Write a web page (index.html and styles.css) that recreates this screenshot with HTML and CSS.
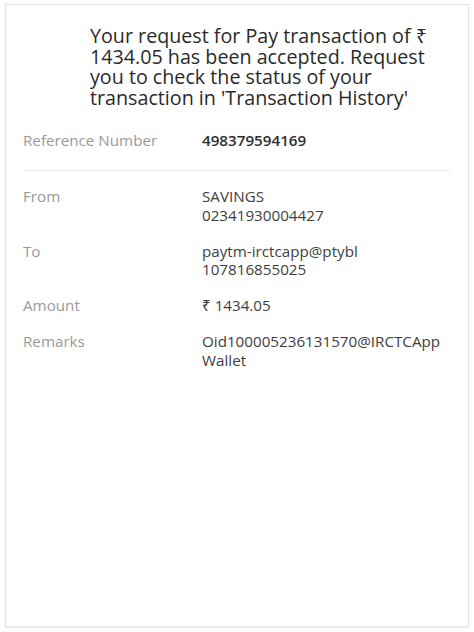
FILE: index.html
```html
<!DOCTYPE html>
<html>
<head>
<meta charset="utf-8">
<link rel="stylesheet" href="styles.css">
</head>
<body>
<div class="card">
  <p class="message">Your request for Pay transaction of ₹ 1434.05 has been accepted. Request you to check the status of your transaction in 'Transaction History'</p>
  <div class="row ref">
    <div class="label">Reference Number</div>
    <div class="value strong">498379594169</div>
  </div>
  <hr class="divider">
  <div class="details">
    <div class="row">
      <div class="label">From</div>
      <div class="value">SAVINGS<br>02341930004427</div>
    </div>
    <div class="row">
      <div class="label">To</div>
      <div class="value">paytm-irctcapp@ptybl<br>107816855025</div>
    </div>
    <div class="row">
      <div class="label">Amount</div>
      <div class="value">₹ 1434.05</div>
    </div>
    <div class="row">
      <div class="label">Remarks</div>
      <div class="value">Oid100005236131570@IRCTCApp Wallet</div>
    </div>
  </div>
</div>
</body>
</html>
```
FILE: styles.css
```css
html, body {
  margin: 0;
  padding: 0;
  background: #ffffff;
}
body {
  font-family: "Open Sans", "Noto Sans", sans-serif;
  color: #333;
  padding: 4px 5px 5px 5px;
}
.card {
  box-sizing: border-box;
  height: 623px;
  border: 1px solid #e4e4e4;
  box-shadow: 0 1px 2px rgba(0,0,0,0.08);
  background: #fff;
  padding: 0 17px;
}
.message {
  margin: 21px 0 0 67px;
  font-size: 19.7px;
  line-height: 20.6px;
  color: #2a2a2a;
  width: 356px;
}
.row {
  display: grid;
  grid-template-columns: 179px 1fr;
  font-size: 15.2px;
  line-height: 18.6px;
}
.ref {
  margin-top: 23px;
}
.label {
  color: #9a9a9a;
}
.value {
  color: #3e3e3e;
}
.strong {
  font-weight: 600;
  color: #2e2e2e;
}
.divider {
  border: 0;
  border-top: 1px solid #ececec;
  margin: 20px 0 16px 0;
}
.details {
  display: flex;
  flex-direction: column;
  gap: 17.5px;
}
```
